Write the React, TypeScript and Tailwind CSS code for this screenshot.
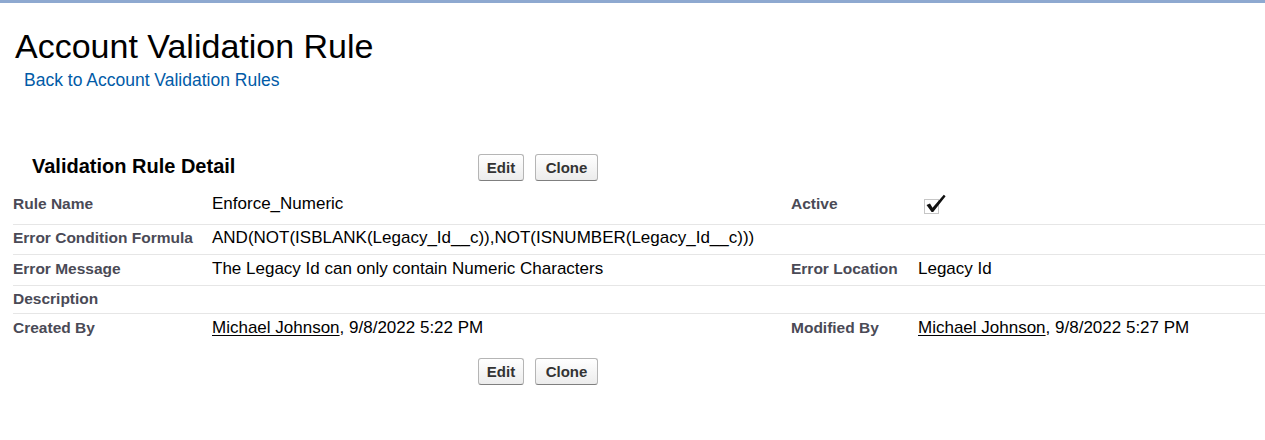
import React from "react";

function Buttons() {
  const btn =
    "h-[27px] rounded-[3px] border border-[#b5b5b5] border-b-[#7f7f7f] bg-gradient-to-b from-[#ffffff] to-[#ececec] text-[15px] font-bold text-[#333] flex items-center justify-center leading-none";
  return (
    <div className="flex gap-[11px]">
      <button className={`${btn} w-[46px]`}>Edit</button>
      <button className={`${btn} w-[63px]`}>Clone</button>
    </div>
  );
}

function Check() {
  return (
    <svg width="30" height="24" viewBox="0 0 30 24" className="block">
      <rect x="6.5" y="6.5" width="14" height="14" fill="none" stroke="#8c8c8c" strokeWidth="1" strokeDasharray="1 1" />
      <path d="M8.5 12 L12 10.5 L14.5 14.8 L25.8 1.8 L27.6 3.2 L15.2 19 L13.6 19 Z" fill="#111" />
    </svg>
  );
}

const label = "text-[15.5px] font-bold text-[#4a4a56] leading-[20px]";
const value = "text-[17px] text-black leading-[20px]";

function Row({
  h,
  pt = "pt-[3px]",
  border = true,
  l1,
  v1,
  l2,
  v2,
}: {
  h: string;
  pt?: string;
  border?: boolean;
  l1: string;
  v1?: React.ReactNode;
  l2?: string;
  v2?: React.ReactNode;
}) {
  return (
    <div className={`flex items-start ml-[13px] ${pt} ${h} ${border ? "border-b border-[#e6e6e6]" : ""}`}>
      <div className={`${label} w-[199px] shrink-0`}>{l1}</div>
      <div className={`${value} w-[579px] shrink-0`}>{v1}</div>
      <div className={`${label} w-[127px] shrink-0`}>{l2}</div>
      <div className={`${value} flex-1`}>{v2}</div>
    </div>
  );
}

function Person({ date }: { date: string }) {
  return (
    <span>
      <span className="underline underline-offset-2">Michael Johnson</span>, {date}
    </span>
  );
}

export default function App() {
  return (
    <div className="w-[1265px] h-[440px] bg-white font-['Liberation_Sans',Arial,sans-serif] overflow-hidden">
      <div className="h-[3px] bg-[#8ea9d0]" />
      <h1 className="mt-[23px] ml-[15px] text-[34px] leading-[40px] text-black font-normal">Account Validation Rule</h1>
      <div className="mt-[4px] ml-[24px] text-[17.5px] leading-[20px] text-[#015ba7]">Back to Account Validation Rules</div>

      <div className="mt-[64px] flex items-start">
        <div className="pl-[32px] w-[478px] text-[20px] leading-[24px] font-bold text-black">Validation Rule Detail</div>
        <Buttons />
      </div>

      <div className="mt-[11px]">
        <Row
          h="h-[33px]"
          pt="pt-[2px]"
          l1="Rule Name"
          v1="Enforce_Numeric"
          l2="Active"
          v2={
            <div className="-mt-[1px]">
              <Check />
            </div>
          }
        />
        <Row
          h="h-[30px]"
          l1="Error Condition Formula"
          v1="AND(NOT(ISBLANK(Legacy_Id__c)),NOT(ISNUMBER(Legacy_Id__c)))"
        />
        <Row
          h="h-[31px]"
          pt="pt-[4px]"
          l1="Error Message"
          v1="The Legacy Id can only contain Numeric Characters"
          l2="Error Location"
          v2="Legacy Id"
        />
        <Row h="h-[28px]" l1="Description" />
        <Row
          h="h-[30px]"
          pt="pt-[4px]"
          border={false}
          l1="Created By"
          v1={<Person date="9/8/2022 5:22 PM" />}
          l2="Modified By"
          v2={<Person date="9/8/2022 5:27 PM" />}
        />
      </div>

      <div className="mt-[14px] ml-[478px]">
        <Buttons />
      </div>
    </div>
  );
}
